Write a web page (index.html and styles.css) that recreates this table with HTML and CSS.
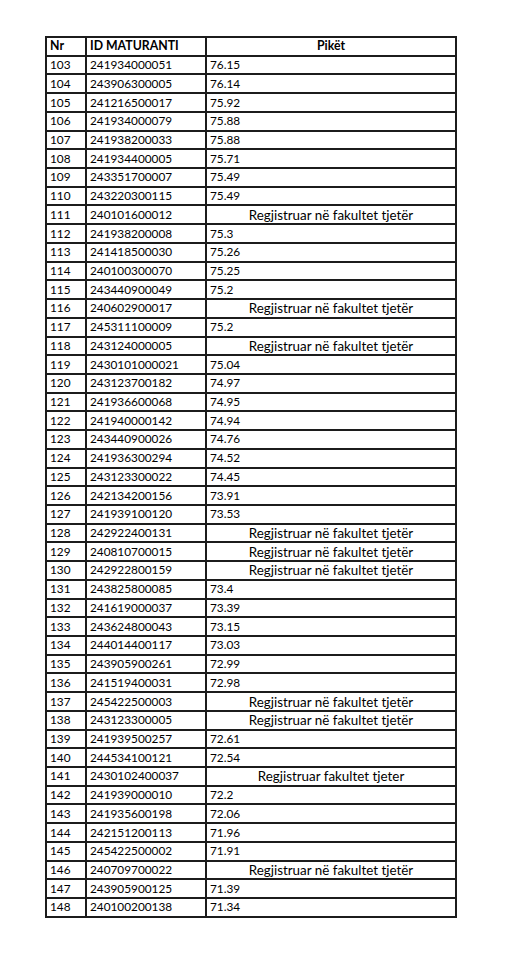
FILE: index.html
```html
<!DOCTYPE html>
<html>
<head>
<meta charset="utf-8">
<link rel="stylesheet" href="styles.css">
</head>
<body>
<table class="list">
<thead>
<tr><th class="c-nr">Nr</th><th class="c-id">ID MATURANTI</th><th class="c-pts">Pikët</th></tr>
</thead>
<tbody>
<tr><td>103</td><td>241934000051</td><td>76.15</td></tr>
<tr><td>104</td><td>243906300005</td><td>76.14</td></tr>
<tr><td>105</td><td>241216500017</td><td>75.92</td></tr>
<tr><td>106</td><td>241934000079</td><td>75.88</td></tr>
<tr><td>107</td><td>241938200033</td><td>75.88</td></tr>
<tr><td>108</td><td>241934400005</td><td>75.71</td></tr>
<tr><td>109</td><td>243351700007</td><td>75.49</td></tr>
<tr><td>110</td><td>243220300115</td><td>75.49</td></tr>
<tr><td>111</td><td>240101600012</td><td class="reg">Regjistruar në fakultet tjetër</td></tr>
<tr><td>112</td><td>241938200008</td><td>75.3</td></tr>
<tr><td>113</td><td>241418500030</td><td>75.26</td></tr>
<tr><td>114</td><td>240100300070</td><td>75.25</td></tr>
<tr><td>115</td><td>243440900049</td><td>75.2</td></tr>
<tr><td>116</td><td>240602900017</td><td class="reg">Regjistruar në fakultet tjetër</td></tr>
<tr><td>117</td><td>245311100009</td><td>75.2</td></tr>
<tr><td>118</td><td>243124000005</td><td class="reg">Regjistruar në fakultet tjetër</td></tr>
<tr><td>119</td><td>2430101000021</td><td>75.04</td></tr>
<tr><td>120</td><td>243123700182</td><td>74.97</td></tr>
<tr><td>121</td><td>241936600068</td><td>74.95</td></tr>
<tr><td>122</td><td>241940000142</td><td>74.94</td></tr>
<tr><td>123</td><td>243440900026</td><td>74.76</td></tr>
<tr><td>124</td><td>241936300294</td><td>74.52</td></tr>
<tr><td>125</td><td>243123300022</td><td>74.45</td></tr>
<tr><td>126</td><td>242134200156</td><td>73.91</td></tr>
<tr><td>127</td><td>241939100120</td><td>73.53</td></tr>
<tr><td>128</td><td>242922400131</td><td class="reg">Regjistruar në fakultet tjetër</td></tr>
<tr><td>129</td><td>240810700015</td><td class="reg">Regjistruar në fakultet tjetër</td></tr>
<tr><td>130</td><td>242922800159</td><td class="reg">Regjistruar në fakultet tjetër</td></tr>
<tr><td>131</td><td>243825800085</td><td>73.4</td></tr>
<tr><td>132</td><td>241619000037</td><td>73.39</td></tr>
<tr><td>133</td><td>243624800043</td><td>73.15</td></tr>
<tr><td>134</td><td>244014400117</td><td>73.03</td></tr>
<tr><td>135</td><td>243905900261</td><td>72.99</td></tr>
<tr><td>136</td><td>241519400031</td><td>72.98</td></tr>
<tr><td>137</td><td>245422500003</td><td class="reg">Regjistruar në fakultet tjetër</td></tr>
<tr><td>138</td><td>243123300005</td><td class="reg">Regjistruar në fakultet tjetër</td></tr>
<tr><td>139</td><td>241939500257</td><td>72.61</td></tr>
<tr><td>140</td><td>244534100121</td><td>72.54</td></tr>
<tr><td>141</td><td>2430102400037</td><td class="reg">Regjistruar fakultet tjeter</td></tr>
<tr><td>142</td><td>241939000010</td><td>72.2</td></tr>
<tr><td>143</td><td>241935600198</td><td>72.06</td></tr>
<tr><td>144</td><td>242151200113</td><td>71.96</td></tr>
<tr><td>145</td><td>245422500002</td><td>71.91</td></tr>
<tr><td>146</td><td>240709700022</td><td class="reg">Regjistruar në fakultet tjetër</td></tr>
<tr><td>147</td><td>243905900125</td><td>71.39</td></tr>
<tr><td>148</td><td>240100200138</td><td>71.34</td></tr>
</tbody>
</table>
</body>
</html>
```
FILE: styles.css
```css
html, body {
  margin: 0;
  padding: 0;
  background: #ffffff;
}
body {
  padding: 36px 0 0 45px;
  font-family: Lato, "Open Sans", sans-serif;
  font-size: 11.8px;
  color: #000000;
}
.list {
  border-collapse: collapse;
  table-layout: fixed;
  width: 412px;
}
.list th, .list td {
  border: 2px solid #1c1c1c;
  height: 18.72px;
  padding: 0 3px;
  box-sizing: border-box;
  line-height: 14px;
  text-align: left;
  white-space: nowrap;
  vertical-align: middle;
}
.list th {
  font-weight: bold;
  font-size: 12.3px;
}
.c-nr { width: 40px; }
.c-id { width: 120px; }
.list th.c-pts { text-align: center; }
.list td.reg {
  text-align: center;
  font-size: 13.4px;
}
```
